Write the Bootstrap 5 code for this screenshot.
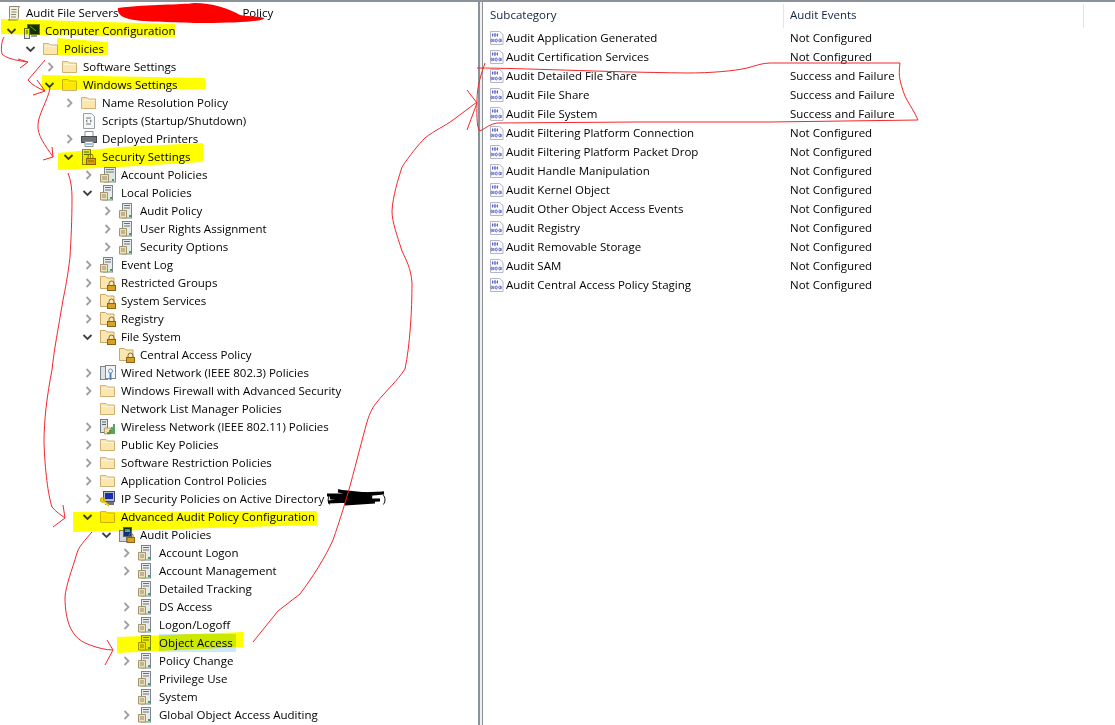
<!DOCTYPE html>
<html lang="en">
<head>
  <meta charset="UTF-8">
  <meta name="viewport" content="width=device-width, initial-scale=1.0">
  <title>Group Policy Management Editor</title>
  <link href="https://cdn.jsdelivr.net/npm/bootstrap@5.3.0/dist/css/bootstrap.min.css" rel="stylesheet">
  <style>
    html, body { height: 725px; overflow: hidden; }
    body {
      background: #fff;
      color: #000;
      font-family: "Open Sans", "Liberation Sans", sans-serif;
      font-size: 11.5px;
      line-height: 18px;
      border-top: 2px solid #8b9299;
      position: relative;
    }
    .tree-pane { width: 478px; padding-top: 2px; }
    .splitter {
      width: 5px;
      height: 723px;
      background: #f0f0f0;
      border-left: 2px solid #8b9299;
      border-right: 1px solid #8b9299;
    }
    .tree-row { height: 18px; white-space: nowrap; }
    .tree-title { padding-left: 6px; }
    .tree-title svg { margin-right: 4px; }
    .chev { width: 14px; height: 18px; margin-right: 5px; flex: none; }
    .tree-ico { width: 16px; height: 16px; margin-right: 5px; flex: none; }
    .is-selected .tree-label { background: #cce8ff; padding-right: 3px; }
    .gap-redact { display: inline-block; width: 121px; }
    .gap-scribble { display: inline-block; width: 52px; }
    .list-pane { min-width: 0; }
    .list-head { height: 26px; padding-top: 2px; color: #10233f; }
    .list-head > div { height: 24px; padding-top: 2px; padding-left: 7px; border-right: 1px solid #e5e5e5; }
    .col-sub { width: 301px; }
    .col-ev { width: 300px; }
    .list-head > .col-ev { padding-left: 6px; }
    .col-rest { flex: 1; border-right: 0 !important; }
    .list-row { height: 19px; }
    .list-row .col-sub { padding-left: 7px; }
    .list-row .col-ev { padding-left: 6px; }
    .bin-ico { width: 14px; height: 14px; margin-right: 2px; flex: none; }
    .ink {
      position: absolute;
      left: 0;
      top: -2px;
      width: 1115px;
      height: 725px;
      pointer-events: none;
    }
    .ink-marker { fill: #ffff00; mix-blend-mode: multiply; }
    .ink-line { fill: none; stroke: #f4262c; stroke-width: 1; }
    .ink-scribble { fill: none; stroke: #000; stroke-width: 3; }
  </style>
</head>
<body>
  <svg width="0" height="0" class="d-block position-absolute">
    <defs>
      <symbol id="i-chev-c" viewBox="0 0 14 18"><path d="M5.500 5l4 4-4 4" fill="none" stroke="#a0a0a0" stroke-width="1.800"/></symbol>
      <symbol id="i-chev-o" viewBox="0 0 14 18"><path d="M2.500 7l4 4 4-4" fill="none" stroke="#404040" stroke-width="1.800"/></symbol>
      <symbol id="i-folder" viewBox="0 0 16 16">
        <path d="M.5 2.500h5.500l1.500 1.500h7v9.500H.5z" fill="#fbe7ae" stroke="#cfb272"/>
        <path d="M1.500 5.500h12.500" stroke="#fff6d8"/>
      </symbol>
      <symbol id="i-lockfolder" viewBox="0 0 16 16">
        <path d="M.5 1.500h5l1.500 1.500h7v10.500H.5z" fill="#fbe7ae" stroke="#c9a766"/>
        <path d="M9 10.500v-2a2.500 2.500 0 0 1 5 0v2" fill="none" stroke="#7a6a3a"/>
        <rect x="7.500" y="10.500" width="8" height="5" fill="#d9a227" stroke="#8a6414"/>
      </symbol>
      <symbol id="i-server" viewBox="0 0 16 16">
        <rect x="3.500" y=".5" width="9" height="14.500" fill="#e8ebee" stroke="#7d858c"/>
        <path d="M5 2.500h6M5 5h6" stroke="#6a7279"/>
        <path d="M.5 7.500h7v7.500h-7z" fill="#f0dfb4" stroke="#a59567"/>
        <path d="M2 10h4M2 12h4" stroke="#8a8a80"/>
        <rect x="10" y="12" width="2" height="2" fill="#35b03c"/>
      </symbol>
      <symbol id="i-server2" viewBox="0 0 16 16">
        <rect x="4.500" y=".5" width="11" height="14.500" fill="#dfe4e8" stroke="#7d858c"/>
        <path d="M6 2.500h8M6 5h8" stroke="#4f8d63"/>
        <path d="M.5 7.500h8v7.500h-8z" fill="#f0dfb4" stroke="#a59567"/>
        <path d="M2 10h5M2 12h5" stroke="#8a8a80"/>
        <rect x="12" y="12" width="2" height="2" fill="#35b03c"/>
      </symbol>
      <symbol id="i-seclock" viewBox="0 0 16 16">
        <rect x="1.500" y=".5" width="8" height="15" fill="#e7e7df" stroke="#7d858c"/>
        <path d="M3 3h5M3 5.500h5" stroke="#5f676e"/>
        <path d="M7 9.500V7.500a2.500 2.500 0 0 1 5 0v2" fill="none" stroke="#7a6a3a"/>
        <rect x="5.500" y="9.500" width="9" height="6" fill="#d9a227" stroke="#8a6414"/>
        <path d="M7 12h6" stroke="#8a6414"/>
      </symbol>
      <symbol id="i-computer" viewBox="0 0 16 16">
        <rect x="3.500" y="1.500" width="12" height="10" fill="#16301a" stroke="#6d7a55"/>
        <path d="M6 3l6 5" stroke="#5fae3a"/>
        <path d="M7 12h6v2H7z" fill="#9aa0a5"/>
        <rect x=".5" y="5.500" width="5" height="10" fill="#e6eaee" stroke="#5e6b78"/>
        <path d="M2 8h2M2 10h2" stroke="#3a6ea5"/>
      </symbol>
      <symbol id="i-script" viewBox="0 0 16 16">
        <path d="M2.500 .5h8l3 3v12h-11z" fill="#f7f7f7" stroke="#9aa0a6"/>
        <path d="M5 5h5M5 11h5M5 8l1.500-1M5 8l1.500 1M10.500 8L9 7M10.500 8L9 9" stroke="#70767c"/>
      </symbol>
      <symbol id="i-printer" viewBox="0 0 16 16">
        <path d="M4 .5h8v5H4z" fill="#fff" stroke="#8a8f94"/>
        <rect x=".5" y="5.500" width="15" height="6" fill="#6d7378" stroke="#44494e"/>
        <path d="M4 10.500h8v5H4z" fill="#fff" stroke="#8a8f94"/>
        <path d="M5 13h6" stroke="#3a86d8"/>
      </symbol>
      <symbol id="i-wired" viewBox="0 0 16 16">
        <rect x=".5" y="1.500" width="7" height="13" fill="#dde2e6" stroke="#7d858c"/>
        <rect x="5.500" y=".5" width="10" height="13" fill="#f2f4f6" stroke="#7d858c"/>
        <circle cx="10.500" cy="6" r="2" fill="#fff" stroke="#6b8fb3"/>
        <path d="M10.500 8v7" stroke="#4a87c4" stroke-width="2"/>
      </symbol>
      <symbol id="i-wireless" viewBox="0 0 16 16">
        <rect x=".5" y=".5" width="7" height="13" fill="#dde2e6" stroke="#6d7a85"/>
        <path d="M2 3h4M2 5.500h4" stroke="#5f676e"/>
        <path d="M4.500 9h6v6h-6z" fill="#f3dfa8" stroke="#b9a470"/>
        <path d="M8 15v-2M10 15v-4M12 15V8M14 15V5" stroke="#2f8f3b" stroke-width="1.600"/>
      </symbol>
      <symbol id="i-ipsec" viewBox="0 0 16 16">
        <rect x="3.500" y=".5" width="11" height="10" fill="#b9bec4" stroke="#4b5056"/>
        <rect x="5" y="2" width="8" height="6" fill="#1a2fb0"/>
        <rect x="5" y="11" width="9" height="3" fill="#6d7378"/>
        <path d="M1 8l8 7" stroke="#f4d21f" stroke-width="2"/>
        <circle cx="2.500" cy="9" r="2" fill="none" stroke="#d4b410" stroke-width="1.400"/>
      </symbol>
      <symbol id="i-auditpol" viewBox="0 0 16 16">
        <rect x=".5" y="3.500" width="7" height="11" fill="#d3d7db" stroke="#7d858c"/>
        <rect x="4.500" y=".5" width="8" height="9" fill="#10307a" stroke="#5f676e"/>
        <path d="M6 2h5v3H6z" fill="#4ea0e0"/>
        <path d="M10 10.500v-2a2 2 0 0 1 4 0v2" fill="none" stroke="#7a6a3a"/>
        <rect x="8" y="10.500" width="7.500" height="5" fill="#d9a227" stroke="#8a6414"/>
      </symbol>
      <symbol id="i-notes" viewBox="0 0 16 16">
        <path d="M3.500 1.500h10c-1 1-1 2-1 3v8c0 1.500-1 2.500-2 2.500h-8c1-.5 1-1.500 1-2.500z" fill="#f3efdc" stroke="#8b8874"/>
        <path d="M5.500 4.500h5M5.500 7h5M5 9.500h5M5 12h5" stroke="#8b8874"/>
      </symbol>
      <symbol id="i-binary" viewBox="0 0 14 14">
        <path d="M.5 .5h9l3.500 3v10H.5z" fill="#fbfbff" stroke="#b4b6c4"/>
        <g fill="none" stroke="#5a62c8">
          <path d="M2.500 2.500v3M7.500 2.500v3M3.800 8v3M11 8v3"/>
          <ellipse cx="5" cy="4" rx="1" ry="1.400"/>
          <ellipse cx="9.800" cy="9.500" rx="1" ry="1.400"/>
          <ellipse cx="1.800" cy="9.500" rx=".7" ry="1.400"/>
          <ellipse cx="6.300" cy="9.500" rx="1" ry="1.400"/>
        </g>
      </symbol>
    </defs>
  </svg>

  <div class="d-flex">
    <div class="tree-pane">
      <div class="tree-row tree-title d-flex align-items-center">
        <svg class="tree-ico"><use href="#i-notes"/></svg>
        <span>Audit File Servers <span class="gap-redact"></span>Policy</span>
      </div>
      <div id="tree"></div>
    </div>
    <div class="splitter"></div>
    <div class="list-pane flex-grow-1">
      <div class="list-head d-flex">
        <div class="col-sub">Subcategory</div>
        <div class="col-ev">Audit Events</div>
        <div class="col-rest"></div>
      </div>
      <div id="list"></div>
    </div>
  </div>

  <svg class="ink" viewBox="0 0 1115 725">
    <g class="ink-marker">
      <path d="M1 19L175 24V37L90 36L1 34z"/>
      <path d="M57 38L108 42V55H57z"/>
      <path d="M42 75L205 78V89L42 90z"/>
      <path d="M58 153L120 147L203 143V162L120 167L58 170z"/>
      <path d="M73 512L317 511V525L73 532z"/>
      <path d="M117 637L243 632V647L117 653z"/>
    </g>
    <path d="M118 8C150 4 180 5 195 3C212 3 228 8 240 15C250 17 260 16 264 18C266 23 200 24 167 22C140 21 116 21 118 8z" fill="#ff0000"/>
    <path class="ink-scribble" d="M327 495L384 493L330 498L380 500L328 502L372 497L338 491L366 494L345 504L375 502"/>
    <g class="ink-line">
      <path d="M4 37C1 42 1 50 2 54C6 58 14 60 27 62M18 59L28 62L20 68"/>
      <path d="M45 60L28 80C32 85 38 88 45 91M37 80L45 91L33 95"/>
      <path d="M50 88C48 100 38 115 38 125C37 135 45 145 53 157L43 160M52 147L53 157"/>
      <path d="M68 173C71 180 72 190 72 197C72 220 71 240 70 257C68 275 65 290 63 300C58 330 54 350 52 370C47 395 44 420 44 443C45 470 48 495 52 507C56 512 61 515 65 518L53 527M63 505L65 518"/>
      <path d="M92 532C85 540 78 548 77 553C72 570 66 585 65 597C65 610 67 620 70 627C75 638 82 642 90 645C98 648 106 650 113 650L105 665M107 640L113 650"/>
      <path d="M253 642L278 611L300 594C312 578 325 558 333 540C340 520 346 500 350 486C357 460 362 440 367 422C370 412 373 407 377 402C385 392 398 380 405 369C410 345 412 310 412 283C411 268 406 260 402 251C397 235 392 222 392 211C393 195 398 180 402 167C410 155 418 145 425 138C435 130 445 126 453 120L477 102M467 90L477 103L467 130"/>
      <path d="M477 68C520 68 600 72 687 73C710 73 735 71 747 68C755 66 762 63 770 63L900 63C899 70 899 75 900 80C902 88 904 95 907 100C911 107 915 113 918 120L770 122L637 122L497 123C490 124 486 128 480 131C476 128 477 110 477 100C477 85 482 72 485 63"/>
    </g>
  </svg>

  <script>
    const tree = [
      [0, 'o', 'computer', 'Computer Configuration'],
      [1, 'o', 'folder', 'Policies'],
      [2, 'c', 'folder', 'Software Settings'],
      [2, 'o', 'folder', 'Windows Settings'],
      [3, 'c', 'folder', 'Name Resolution Policy'],
      [3, '', 'script', 'Scripts (Startup/Shutdown)'],
      [3, 'c', 'printer', 'Deployed Printers'],
      [3, 'o', 'seclock', 'Security Settings'],
      [4, 'c', 'server2', 'Account Policies'],
      [4, 'o', 'server', 'Local Policies'],
      [5, 'c', 'server', 'Audit Policy'],
      [5, 'c', 'server', 'User Rights Assignment'],
      [5, 'c', 'server', 'Security Options'],
      [4, 'c', 'server', 'Event Log'],
      [4, 'c', 'lockfolder', 'Restricted Groups'],
      [4, 'c', 'lockfolder', 'System Services'],
      [4, 'c', 'lockfolder', 'Registry'],
      [4, 'o', 'lockfolder', 'File System'],
      [5, '', 'lockfolder', 'Central Access Policy'],
      [4, 'c', 'wired', 'Wired Network (IEEE 802.3) Policies'],
      [4, 'c', 'folder', 'Windows Firewall with Advanced Security'],
      [4, '', 'folder', 'Network List Manager Policies'],
      [4, 'c', 'wireless', 'Wireless Network (IEEE 802.11) Policies'],
      [4, 'c', 'folder', 'Public Key Policies'],
      [4, 'c', 'folder', 'Software Restriction Policies'],
      [4, 'c', 'folder', 'Application Control Policies'],
      [4, 'c', 'ipsec', 'IP Security Policies on Active Directory (<span class="gap-scribble"></span>)'],
      [4, 'o', 'folder', 'Advanced Audit Policy Configuration'],
      [5, 'o', 'auditpol', 'Audit Policies'],
      [6, 'c', 'server', 'Account Logon'],
      [6, 'c', 'server', 'Account Management'],
      [6, '', 'server', 'Detailed Tracking'],
      [6, 'c', 'server', 'DS Access'],
      [6, 'c', 'server', 'Logon/Logoff'],
      [6, '', 'server', 'Object Access', true],
      [6, 'c', 'server', 'Policy Change'],
      [6, '', 'server', 'Privilege Use'],
      [6, '', 'server', 'System'],
      [6, 'c', 'server', 'Global Object Access Auditing']
    ];

    const rows = [
      ['Audit Application Generated', 'Not Configured'],
      ['Audit Certification Services', 'Not Configured'],
      ['Audit Detailed File Share', 'Success and Failure'],
      ['Audit File Share', 'Success and Failure'],
      ['Audit File System', 'Success and Failure'],
      ['Audit Filtering Platform Connection', 'Not Configured'],
      ['Audit Filtering Platform Packet Drop', 'Not Configured'],
      ['Audit Handle Manipulation', 'Not Configured'],
      ['Audit Kernel Object', 'Not Configured'],
      ['Audit Other Object Access Events', 'Not Configured'],
      ['Audit Registry', 'Not Configured'],
      ['Audit Removable Storage', 'Not Configured'],
      ['Audit SAM', 'Not Configured'],
      ['Audit Central Access Policy Staging', 'Not Configured']
    ];

    document.getElementById('tree').innerHTML = tree.map(([depth, chev, icon, text, selected]) => `
      <div class="tree-row d-flex align-items-center${selected ? ' is-selected' : ''}" style="padding-left: ${5 + depth * 19}px">
        <svg class="chev">${chev ? `<use href="#i-chev-${chev}"/>` : ''}</svg>
        <svg class="tree-ico"><use href="#i-${icon}"/></svg>
        <span class="tree-label">${text}</span>
      </div>`).join('');

    document.getElementById('list').innerHTML = rows.map(([name, state]) => `
      <div class="list-row d-flex align-items-center">
        <div class="col-sub d-flex align-items-center">
          <svg class="bin-ico"><use href="#i-binary"/></svg>
          <span>${name}</span>
        </div>
        <div class="col-ev">${state}</div>
      </div>`).join('');
  </script>
</body>
</html>
